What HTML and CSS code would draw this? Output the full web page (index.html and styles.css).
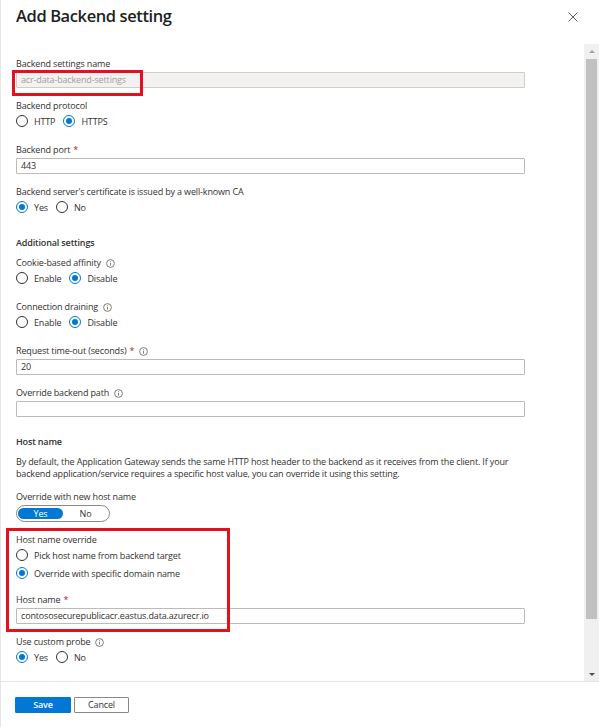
FILE: index.html
```html
<!DOCTYPE html>
<html lang="en">
<head>
<meta charset="utf-8">
<title>Add Backend setting</title>
<link rel="stylesheet" href="styles.css">
</head>
<body>
<div class="panel">
  <header class="head">
    <h1 class="title">Add Backend setting</h1>
    <svg class="close" width="10" height="10" viewBox="0 0 10 10" aria-label="Close"><path d="M0.5 0.5L9.5 9.5M9.5 0.5L0.5 9.5" stroke="#605e5c" stroke-width="1" fill="none"/></svg>
  </header>

  <div class="body">
    <div class="form">
      <div class="field">
        <div class="label">Backend settings name</div>
        <div class="input disabled">acr-data-backend-settings</div>
      </div>

      <div class="field radio-field">
        <div class="label">Backend protocol</div>
        <div class="radios">
          <span class="radio"><span class="dot"></span>HTTP</span>
          <span class="radio"><span class="dot on"></span>HTTPS</span>
        </div>
      </div>

      <div class="field">
        <div class="label">Backend port <span class="req">*</span></div>
        <div class="input">443</div>
      </div>

      <div class="field radio-field">
        <div class="label">Backend server's certificate is issued by a well-known CA</div>
        <div class="radios">
          <span class="radio"><span class="dot on"></span>Yes</span>
          <span class="radio"><span class="dot"></span>No</span>
        </div>
      </div>

      <div class="section">Additional settings</div>

      <div class="field radio-field">
        <div class="label">Cookie-based affinity <svg class="info" width="9" height="9" viewBox="0 0 9 9"><circle cx="4.5" cy="4.5" r="3.9" fill="none" stroke="#605e5c" stroke-width="0.8"/><path d="M4.5 4v2.6" stroke="#605e5c" stroke-width="0.8"/><circle cx="4.5" cy="2.8" r="0.5" fill="#605e5c"/></svg></div>
        <div class="radios">
          <span class="radio"><span class="dot"></span>Enable</span>
          <span class="radio"><span class="dot on"></span>Disable</span>
        </div>
      </div>

      <div class="field radio-field">
        <div class="label">Connection draining <svg class="info" width="9" height="9" viewBox="0 0 9 9"><circle cx="4.5" cy="4.5" r="3.9" fill="none" stroke="#605e5c" stroke-width="0.8"/><path d="M4.5 4v2.6" stroke="#605e5c" stroke-width="0.8"/><circle cx="4.5" cy="2.8" r="0.5" fill="#605e5c"/></svg></div>
        <div class="radios">
          <span class="radio"><span class="dot"></span>Enable</span>
          <span class="radio"><span class="dot on"></span>Disable</span>
        </div>
      </div>

      <div class="field">
        <div class="label">Request time-out (seconds) <span class="req">*</span> <svg class="info" width="9" height="9" viewBox="0 0 9 9"><circle cx="4.5" cy="4.5" r="3.9" fill="none" stroke="#605e5c" stroke-width="0.8"/><path d="M4.5 4v2.6" stroke="#605e5c" stroke-width="0.8"/><circle cx="4.5" cy="2.8" r="0.5" fill="#605e5c"/></svg></div>
        <div class="input">20</div>
      </div>

      <div class="field">
        <div class="label">Override backend path <svg class="info" width="9" height="9" viewBox="0 0 9 9"><circle cx="4.5" cy="4.5" r="3.9" fill="none" stroke="#605e5c" stroke-width="0.8"/><path d="M4.5 4v2.6" stroke="#605e5c" stroke-width="0.8"/><circle cx="4.5" cy="2.8" r="0.5" fill="#605e5c"/></svg></div>
        <div class="input"></div>
      </div>

      <div class="section">Host name</div>
      <p class="para">By default, the Application Gateway sends the same HTTP host header to the backend as it receives from the client. If your backend application/service requires a specific host value, you can override it using this setting.</p>

      <div class="field">
        <div class="label">Override with new host name</div>
        <div class="toggle">
          <span class="opt sel">Yes</span>
          <span class="opt">No</span>
        </div>
      </div>

      <div class="field override-field">
        <div class="label">Host name override</div>
        <div class="radio-stack">
          <span class="radio"><span class="dot"></span>Pick host name from backend target</span>
          <span class="radio"><span class="dot on"></span>Override with specific domain name</span>
        </div>
      </div>

      <div class="field">
        <div class="label">Host name <span class="req">*</span></div>
        <div class="input">contososecurepublicacr.eastus.data.azurecr.io</div>
      </div>

      <div class="field radio-field">
        <div class="label">Use custom probe <svg class="info" width="9" height="9" viewBox="0 0 9 9"><circle cx="4.5" cy="4.5" r="3.9" fill="none" stroke="#605e5c" stroke-width="0.8"/><path d="M4.5 4v2.6" stroke="#605e5c" stroke-width="0.8"/><circle cx="4.5" cy="2.8" r="0.5" fill="#605e5c"/></svg></div>
        <div class="radios">
          <span class="radio"><span class="dot on"></span>Yes</span>
          <span class="radio"><span class="dot"></span>No</span>
        </div>
      </div>
    </div>

    <div class="scrollbar">
      <div class="sb-btn"><span class="tri-up"></span></div>
      <div class="sb-thumb"></div>
      <div class="sb-track"></div>
      <div class="sb-btn"><span class="tri-down"></span></div>
    </div>
  </div>

  <footer class="foot">
    <button class="btn primary">Save</button>
    <button class="btn">Cancel</button>
  </footer>

  <div class="callout callout-name"></div>
  <div class="callout callout-host"></div>
</div>
</body>
</html>
```

FILE: styles.css
```css
* { box-sizing: border-box; }

html, body {
  margin: 0;
  padding: 0;
  background: #ffffff;
}

body {
  font-family: "Segoe UI", "Open Sans", "Noto Sans", sans-serif;
  font-size: 9px;
  letter-spacing: -0.15px;
  color: #323130;
}

.panel {
  position: relative;
  width: 599px;
  height: 727px;
  display: flex;
  flex-direction: column;
  box-shadow: inset 1px 0 0 #e6e6e6;
}

.head {
  height: 44px;
  flex: none;
  display: flex;
  justify-content: space-between;
  align-items: flex-start;
  padding: 6px 21px 0 16px;
}

.title {
  margin: 0;
  font-size: 16.5px;
  line-height: 20px;
  font-weight: 600;
  letter-spacing: -0.4px;
  color: #201f1e;
}

.close {
  margin-top: 6px;
  display: block;
}

.body {
  height: 637px;
  flex: none;
  display: flex;
}

.form {
  flex: 1;
  padding: 13px 59px 0 16px;
  overflow: hidden;
  display: flex;
  flex-direction: column;
}

.field {
  margin-bottom: 11px;
}

.field.radio-field {
  margin-bottom: 15px;
}

.field.override-field {
  margin-bottom: 13px;
}

.label {
  height: 14px;
  line-height: 14px;
  margin-bottom: 1px;
  white-space: nowrap;
  display: flex;
  align-items: center;
}

.req {
  color: #a4262c;
  margin-left: 3px;
}

.info {
  margin-left: 5px;
  display: block;
}

.input {
  height: 16px;
  line-height: 14px;
  border: 1px solid #bdbab7;
  border-radius: 1px;
  padding: 0 4px;
  background: #ffffff;
  color: #323130;
  white-space: nowrap;
}

.input.disabled {
  background: #f3f2f1;
  border-color: #cfcdcb;
  color: #a19f9d;
}

.radios {
  height: 14px;
  display: flex;
  align-items: center;
  gap: 8px;
}

.radio-stack {
  display: flex;
  flex-direction: column;
  gap: 4px;
}

.radio {
  height: 14px;
  display: flex;
  align-items: center;
  gap: 6px;
}

.dot {
  width: 12px;
  height: 12px;
  border-radius: 50%;
  border: 1px solid #323130;
  display: flex;
  align-items: center;
  justify-content: center;
  flex: none;
}

.dot.on {
  border-color: #0078d4;
}

.dot.on::after {
  content: "";
  width: 6px;
  height: 6px;
  border-radius: 50%;
  background: #0078d4;
}

.section {
  margin-top: 7px;
  margin-bottom: 6px;
  height: 14px;
  line-height: 14px;
  font-weight: 600;
}

.para {
  margin: 1px 0 10px 0;
  line-height: 12px;
  width: 500px;
}

.toggle {
  width: 94px;
  height: 17px;
  border: 1px solid #8a8886;
  border-radius: 9px;
  padding: 2px 1px;
  display: flex;
}

.opt {
  flex: 1;
  height: 11px;
  line-height: 11px;
  text-align: center;
  border-radius: 6px;
  color: #323130;
}

.opt.sel {
  background: #0078d4;
  color: #ffffff;
}

.scrollbar {
  width: 15px;
  flex: none;
  background: #f0f0f0;
  display: flex;
  flex-direction: column;
}

.sb-btn {
  height: 14px;
  flex: none;
  display: flex;
  align-items: center;
  justify-content: center;
}

.tri-up {
  width: 0;
  height: 0;
  border-left: 3px solid transparent;
  border-right: 3px solid transparent;
  border-bottom: 3px solid #a3a3a3;
}

.tri-down {
  width: 0;
  height: 0;
  border-left: 3px solid transparent;
  border-right: 3px solid transparent;
  border-top: 3px solid #505050;
}

.sb-thumb {
  height: 560px;
  margin: 1px 2px 0 2px;
  background: #c1c1c1;
  flex: none;
}

.sb-track {
  flex: 1;
}

.foot {
  flex: 1;
  border-top: 1px solid #e6e6e6;
  padding: 15px 0 0 15px;
  display: flex;
  align-items: flex-start;
  gap: 3px;
}

.btn {
  height: 16px;
  width: 55px;
  padding: 0;
  margin: 0;
  font-family: inherit;
  font-size: 9px;
  letter-spacing: -0.15px;
  line-height: 14px;
  border: 1px solid #8a8886;
  border-radius: 1px;
  background: #ffffff;
  color: #323130;
}

.btn.primary {
  width: 56px;
  background: #0078d4;
  border-color: #0078d4;
  color: #ffffff;
  font-weight: 600;
}

.callout {
  position: absolute;
  border: 3px solid #e3101e;
}

.callout-name {
  left: 12px;
  top: 70px;
  width: 131px;
  height: 26px;
}

.callout-host {
  left: 6px;
  top: 528px;
  width: 224px;
  height: 104px;
}
```
